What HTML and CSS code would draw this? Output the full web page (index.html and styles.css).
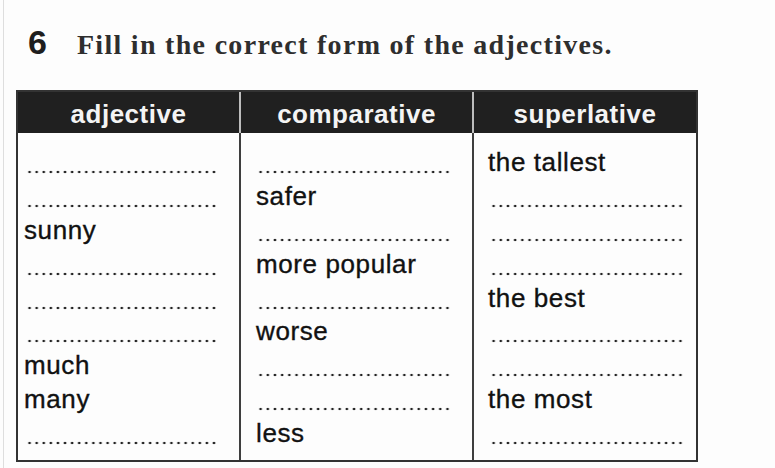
FILE: index.html
```html
<!DOCTYPE html>
<html lang="en">
<head>
<meta charset="utf-8">
<title>Exercise 6</title>
<link rel="stylesheet" href="styles.css">
</head>
<body>
<div class="page">
  <div class="title">
    <span class="num">6</span>
    <span class="instr">Fill in the correct form of the adjectives.</span>
  </div>
  <div class="table">
    <div class="col col-1">
      <div class="head">adjective</div>
      <div class="cells">
        <div class="row"><span class="dots"></span></div>
        <div class="row"><span class="dots"></span></div>
        <div class="row">sunny</div>
        <div class="row"><span class="dots"></span></div>
        <div class="row"><span class="dots"></span></div>
        <div class="row"><span class="dots"></span></div>
        <div class="row">much</div>
        <div class="row">many</div>
        <div class="row"><span class="dots"></span></div>
      </div>
    </div>
    <div class="col col-2">
      <div class="head">comparative</div>
      <div class="cells">
        <div class="row"><span class="dots"></span></div>
        <div class="row">safer</div>
        <div class="row"><span class="dots"></span></div>
        <div class="row">more popular</div>
        <div class="row"><span class="dots"></span></div>
        <div class="row">worse</div>
        <div class="row"><span class="dots"></span></div>
        <div class="row"><span class="dots"></span></div>
        <div class="row">less</div>
      </div>
    </div>
    <div class="col col-3">
      <div class="head">superlative</div>
      <div class="cells">
        <div class="row">the tallest</div>
        <div class="row"><span class="dots"></span></div>
        <div class="row"><span class="dots"></span></div>
        <div class="row"><span class="dots"></span></div>
        <div class="row">the best</div>
        <div class="row"><span class="dots"></span></div>
        <div class="row"><span class="dots"></span></div>
        <div class="row">the most</div>
        <div class="row"><span class="dots"></span></div>
      </div>
    </div>
  </div>
</div>
</body>
</html>
```

FILE: styles.css
```css
html, body {
  margin: 0;
  padding: 0;
  background: #fdfdfd;
}

.page {
  margin-left: 3px;
  border-left: 1px solid #dedede;
  height: 468px;
  box-sizing: border-box;
  padding-top: 22px;
}

.title {
  height: 68px;
  display: flex;
  align-items: baseline;
  line-height: 40px;
  padding-left: 24px;
  color: #2a2a2a;
}

.num {
  font-family: "Liberation Sans", Arial, sans-serif;
  font-weight: bold;
  font-size: 34px;
  margin-right: 30px;
  color: #1e1e1e;
}

.instr {
  font-family: "Liberation Serif", "Times New Roman", serif;
  font-weight: bold;
  font-size: 28px;
  letter-spacing: 1.3px;
  color: #2e2e2e;
}

.table {
  margin-left: 12px;
  width: 682px;
  box-sizing: border-box;
  border: 2px solid #333;
  display: grid;
  grid-template-columns: 221px 233px 224px;
  font-family: "Liberation Sans", Arial, sans-serif;
}

.col {
  display: flex;
  flex-direction: column;
}

.head {
  height: 41px;
  box-sizing: border-box;
  padding-top: 3px;
  line-height: 38px;
  background: #202020;
  color: #f4f4f4;
  font-weight: bold;
  font-size: 26px;
  letter-spacing: 0.5px;
  text-align: center;
}

.cells {
  padding-top: 13px;
  padding-bottom: 9px;
  color: #111;
  font-size: 26px;
  letter-spacing: 0.6px;
  -webkit-text-stroke: 0.35px #111;
}

.row {
  height: 33.9px;
  line-height: 33.9px;
  white-space: nowrap;
}

.col-1 .cells { padding-left: 6px; }
.col-2 .cells, .col-3 .cells { border-left: 2px solid #3e3e3e; }
.col-2 .head, .col-3 .head { border-left: 2px solid #bdbdbd; }
.col-2 .cells { padding-left: 15px; }
.col-3 .cells { padding-left: 14px; }

.dots {
  display: inline-block;
  height: 4px;
  vertical-align: -3px;
  margin-left: 1px;
  background-image: radial-gradient(circle, #222 0 1.1px, transparent 1.6px);
  background-size: 7.1px 4px;
  background-repeat: repeat-x;
}

.col-1 .dots { width: 191.7px; margin-left: 2px; }
.col-2 .dots { width: 194.4px; background-size: 7.2px 4px; }
.col-3 .dots { width: 194.4px; background-size: 7.2px 4px; margin-left: 2px; }
```
